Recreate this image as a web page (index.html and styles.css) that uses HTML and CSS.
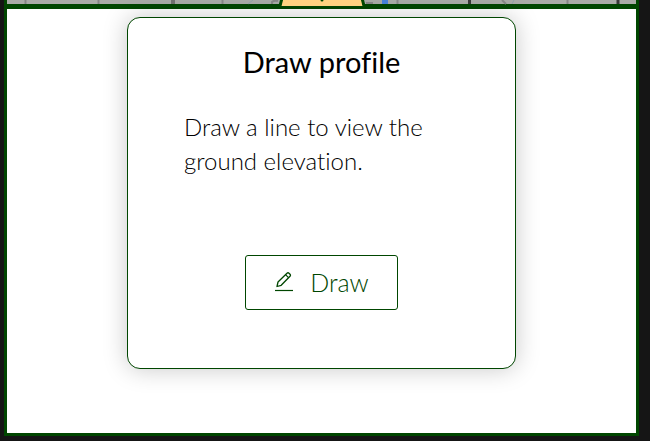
FILE: index.html
```html
<!DOCTYPE html>
<html lang="en">
  <head>
    <meta charset="UTF-8" />
    <title>Elevation profile</title>
    <meta name="viewport" content="width=device-width, initial-scale=1.0" />
    <link rel="stylesheet" href="styles.css">
  </head>
  <body>
    <main class="viewer">
      <div class="map">
        <svg class="map-tiles" width="629" height="4" viewBox="7 0 629 4" aria-hidden="true">
          <path d="M25.500 0v4M98.500 0v4M222.500 0v4M397.500 0v4M567.500 0v4" stroke="#858585" stroke-width="2" />
          <path d="M173 0v4" stroke="#707070" stroke-width="4" />
          <path d="M248 4l5-4M512 4l2-4" stroke="#8fa0a6" />
          <path d="M272 4v-2q2-2 6-1M366 3h7M502 0l4 4" stroke="#858585" fill="none" stroke-width="2" />
          <path d="M385 0v4" stroke="#4680d8" stroke-width="6" />
          <path d="M469.500 0v4M618 0v4" stroke="#383838" stroke-width="3" />
          <path d="M281 6l2-8h78l2 8z" fill="#ffd280" />
          <path d="M280 6l2-8M364 6l-2-8" stroke="#004600" stroke-width="3" />
          <circle cx="322" cy="0" r="1.500" fill="#004600" />
        </svg>
      </div>
      <section class="panel">
        <div class="card">
          <h1 class="card-title">Draw profile</h1>
          <p class="card-text">Draw a line to view the ground elevation.</p>
          <button class="draw-btn" type="button">
            <svg class="draw-icon" width="20" height="20" viewBox="0 0 20 20" fill="none" stroke="currentColor" aria-hidden="true">
              <path d="M3 14.500l1-4.500L13 1.200q1-.9 2 0l1 1q.9 1 0 2L7.200 13.300z" stroke-width="1.300" stroke-linejoin="round" />
              <path d="M11.500 2.700l3 3" stroke-width="1.200" />
              <path d="M1 18.500h18" stroke-width="1.200" />
            </svg>
            Draw
          </button>
        </div>
      </section>
    </main>
  </body>
</html>
```
FILE: styles.css
```css
* {
  box-sizing: border-box;
}
body {
  margin: 0;
  background: #151515;
  color: #000;
  font-family: Lato, "Open Sans", sans-serif;
  font-variant-ligatures: none;
}
.viewer {
  display: flex;
  flex-direction: column;
  min-height: calc(100vh - 5px);
  margin: 0 11px 5px 4px;
  border: 3px solid #004600;
  border-top: none;
  background: #fff;
}
.map {
  height: 4px;
  background: #aaaca8;
}
.map-tiles {
  display: block;
  position: relative;
  overflow: visible;
}
.panel {
  flex: 1;
  padding: 8px;
  border-top: 5px solid #004600;
}
.card {
  display: flex;
  flex-direction: column;
  align-items: center;
  max-width: 389px;
  margin: 0 auto;
  padding: 26px 56px 58px;
  border: 1px solid #004600;
  border-radius: 13px;
  background: #fff;
  box-shadow: 0 0 24px rgba(0, 0, 0, 0.22);
}
.card-title {
  margin: 0 0 30px;
  font-size: 29px;
  line-height: 36px;
  font-weight: 400;
}
.card-text {
  align-self: stretch;
  margin: 0 0 77px;
  font-size: 24px;
  line-height: 34px;
  font-weight: 300;
}
.draw-btn {
  display: flex;
  align-items: center;
  justify-content: center;
  gap: 16px;
  min-width: 153px;
  height: 55px;
  padding: 0 28px 2px;
  border: 1px solid #004600;
  border-radius: 3px;
  background: #fff;
  color: #004600;
  font-family: inherit;
  font-size: 25px;
  line-height: 34px;
  font-weight: 300;
  cursor: pointer;
}
.draw-btn:hover {
  background: #f2f7f2;
}
```
